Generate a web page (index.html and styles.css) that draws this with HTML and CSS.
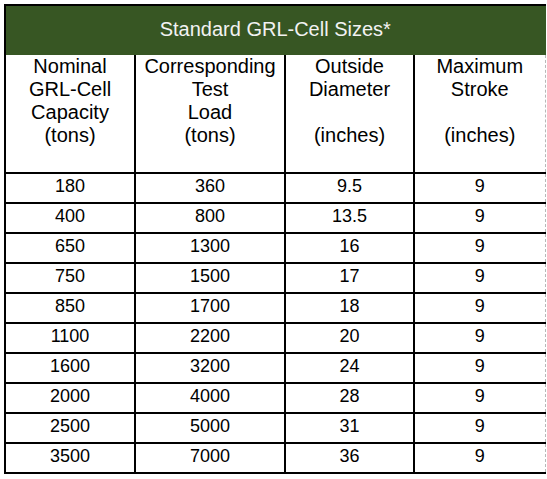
FILE: index.html
```html
<!DOCTYPE html>
<html>
<head>
<meta charset="utf-8">
<link rel="stylesheet" href="styles.css">
</head>
<body>
<table class="sizes">
  <colgroup>
    <col class="c1"><col class="c2"><col class="c3"><col class="c4">
  </colgroup>
  <thead>
    <tr class="title-row"><th colspan="4" class="title">Standard GRL-Cell Sizes*</th></tr>
    <tr class="head-row">
      <th>Nominal<br>GRL-Cell<br>Capacity<br>(tons)</th>
      <th>Corresponding<br>Test<br>Load<br>(tons)</th>
      <th>Outside<br>Diameter<br><br>(inches)</th>
      <th class="last">Maximum<br>Stroke<br><br>(inches)</th>
    </tr>
  </thead>
  <tbody>
    <tr><td>180</td><td>360</td><td>9.5</td><td class="last">9</td></tr>
    <tr><td>400</td><td>800</td><td>13.5</td><td class="last">9</td></tr>
    <tr><td>650</td><td>1300</td><td>16</td><td class="last">9</td></tr>
    <tr><td>750</td><td>1500</td><td>17</td><td class="last">9</td></tr>
    <tr><td>850</td><td>1700</td><td>18</td><td class="last">9</td></tr>
    <tr><td>1100</td><td>2200</td><td>20</td><td class="last">9</td></tr>
    <tr><td>1600</td><td>3200</td><td>24</td><td class="last">9</td></tr>
    <tr><td>2000</td><td>4000</td><td>28</td><td class="last">9</td></tr>
    <tr><td>2500</td><td>5000</td><td>31</td><td class="last">9</td></tr>
    <tr><td>3500</td><td>7000</td><td>36</td><td class="last">9</td></tr>
  </tbody>
</table>
</body>
</html>
```
FILE: styles.css
```css
html, body {
  margin: 0;
  padding: 0;
  background: #ffffff;
}
body {
  padding: 4px 0 0 4px;
  font-family: "Liberation Sans", Arial, sans-serif;
  color: #000;
}
.sizes {
  border-collapse: collapse;
  table-layout: fixed;
  width: 540px;
}
.c1 { width: 130px; }
.c2 { width: 150px; }
.c3 { width: 129px; }
.c4 { width: 131px; }
.title {
  background: #375623;
  color: #f2f2f2;
  font-weight: normal;
  font-size: 20px;
  height: 46px;
  padding: 0 0 3px 0;
  border-top: 2px solid #000;
  border-left: 2px solid #000;
  border-right: 1px solid #375623;
  vertical-align: middle;
  text-align: center;
}
.head-row th {
  font-weight: normal;
  font-size: 20px;
  line-height: 23px;
  height: 117px;
  padding: 0;
  vertical-align: top;
  text-align: center;
  border-left: 2px solid #000;
  border-bottom: 2px solid #000;
}
td {
  font-size: 18px;
  height: 24px;
  padding: 0 0 4px 0;
  text-align: center;
  vertical-align: middle;
  border-left: 2px solid #000;
  border-bottom: 2px solid #000;
}
.last {
  border-right: 1px dashed #b8b8b8;
}
```
